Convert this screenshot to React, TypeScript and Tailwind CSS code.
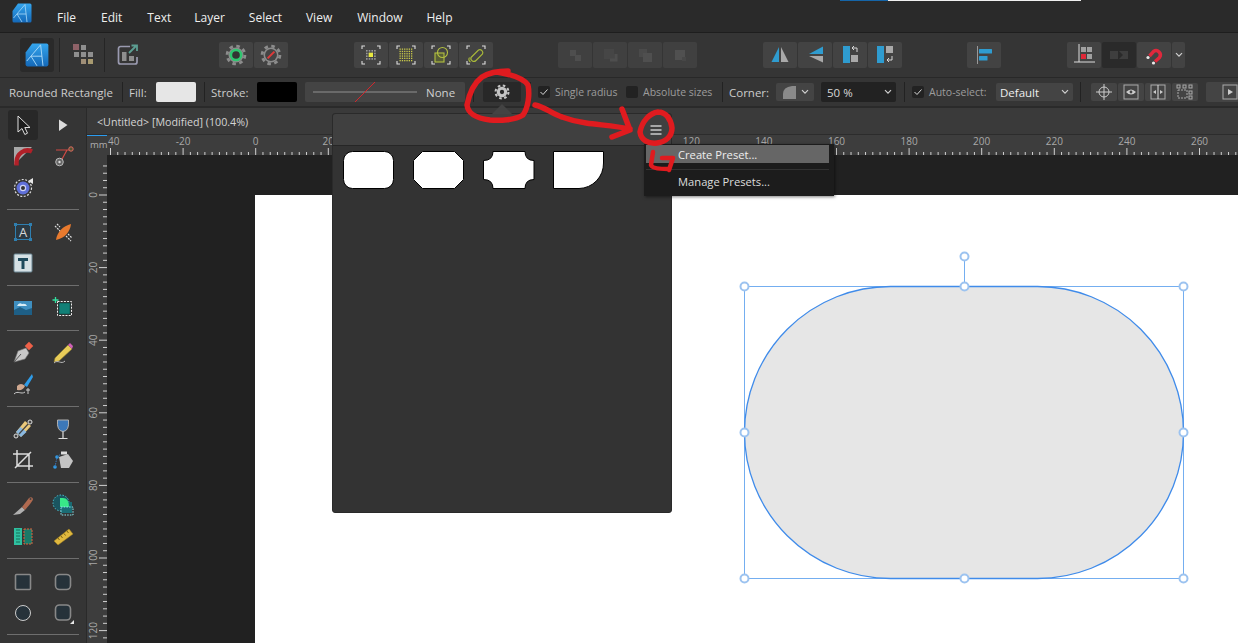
import React from "react";

const I = ({ children, w = 24, h = 24 }: { children: React.ReactNode; w?: number; h?: number }) => (
  <svg width={w} height={h} viewBox={`0 0 ${w} ${h}`} className="block shrink-0">{children}</svg>
);

const Logo = ({ s, id }: { s: number; id: string }) => (
  <svg width={s} height={s} viewBox="0 0 20 20" className="block shrink-0">
    <defs>
      <linearGradient id={id} x1="0" y1="0" x2="0" y2="1">
        <stop offset="0" stopColor="#35a6ee" />
        <stop offset="1" stopColor="#1468b8" />
      </linearGradient>
    </defs>
    <path d="M6 .5H18a1.5 1.5 0 0 1 1.5 1.5V18a1.5 1.5 0 0 1-1.5 1.5H2A1.5 1.5 0 0 1 .5 18V8Z" fill={`url(#${id})`} />
    <path d="M1.5 15 13 1.5M13 1.5 15 19M5 11H14.2M5 11 10 19" stroke="#a8d8f8" strokeWidth=".8" fill="none" />
  </svg>
);

const Gear = ({ size = 26, color = "#8c8c8c", inner = 7.2, sw = 3.4, children }: { size?: number; color?: string; inner?: number; sw?: number; children?: React.ReactNode }) => (
  <svg width={size} height={size} viewBox="0 0 26 26" className="block shrink-0">
    <circle cx="13" cy="13" r="10.5" fill="none" stroke={color} strokeWidth="3.4" strokeDasharray="4.2 4.05" />
    <circle cx="13" cy="13" r={inner} fill="none" stroke={color} strokeWidth={sw} />
    {children}
  </svg>
);

const dots = (x0: number, y0: number, n: number, step: number, color: string, size = 1.6) => {
  const r: React.ReactNode[] = [];
  for (let a = 0; a < n; a++)
    for (let b = 0; b < n; b++)
      r.push(<rect key={`${a}-${b}`} x={x0 + a * step} y={y0 + b * step} width={size} height={size} fill={color} />);
  return r;
};

const Corners = () => (
  <path d="M3 6V3H6M18 3H21V6M21 18V21H18M6 21H3V18" stroke="#ddd" strokeWidth="1.1" fill="none" />
);

const TB = ({ children, off }: { children?: React.ReactNode; off?: boolean }) => (
  <div className={`w-[34px] h-[26px] rounded-[2px] flex items-center justify-center ${off ? "bg-[#404040]" : "bg-[#434343]"}`}>{children}</div>
);

const CB = ({ children }: { children?: React.ReactNode }) => (
  <div className="w-[26px] h-[18px] bg-[#444444] rounded-[2px] flex items-center justify-center">{children}</div>
);

const Sep = ({ ml }: { ml: string }) => <div className={`w-px h-[20px] bg-[#222222] ${ml}`} />;

const Check = ({ on }: { on?: boolean }) => (
  <div className="w-[12px] h-[12px] bg-[#222222] rounded-[2px] flex items-center justify-center shrink-0">
    {on && (
      <svg width="10" height="10" viewBox="0 0 10 10">
        <path d="M1.5 5 4 7.5 8.5 2.5" stroke="#d8d8d8" strokeWidth="1" fill="none" />
      </svg>
    )}
  </div>
);

const Chev = ({ c = "#d0d0d0" }: { c?: string }) => (
  <svg width="8" height="6" viewBox="0 0 8 6" className="block">
    <path d="M1 1.2 4 4.2 7 1.2" stroke={c} strokeWidth="1.2" fill="none" />
  </svg>
);

const ToolSep = ({ cls }: { cls: string }) => <div className={`ml-[7px] w-[72px] h-px bg-[#6e6e6e] ${cls}`} />;

const ToolRow = ({ a, b, cls = "h-[31px]", sel }: { a?: React.ReactNode; b?: React.ReactNode; cls?: string; sel?: boolean }) => (
  <div className={`flex ${cls}`}>
    <div className="w-[46px] flex items-center justify-center">
      <div className={`w-[30px] h-[30px] rounded-[3px] flex items-center justify-center ${sel ? "bg-[#282828]" : ""}`}>{a}</div>
    </div>
    <div className="w-[34px] flex items-center justify-center">{b}</div>
  </div>
);

const ROOT = 255.7;
const PX = 72.6 / 20;

const HRuler = () => {
  const t: React.ReactNode[] = [];
  for (let v = -40; v <= 270; v += 2) {
    const x = ROOT + v * PX;
    const major = v % 20 === 0;
    t.push(<line key={v} x1={x} x2={x} y1={major ? 148 : 152} y2={155} stroke="#d0d0d0" strokeWidth="1" />);
    if (major)
      t.push(
        <text key={`t${v}`} x={v === -40 ? 108 : x} y={145} textAnchor={v === -40 ? "start" : "middle"} fontSize="10" fill="#a8a8a8">
          {v === -40 ? 40 : v}
        </text>
      );
  }
  return (
    <svg width="1131" height="20" viewBox="107 135 1131 20" className="block">
      {t}
    </svg>
  );
};

const VRuler = () => {
  const t: React.ReactNode[] = [];
  for (let v = -8; v <= 124; v += 2) {
    const y = 195 + v * PX;
    const major = v % 20 === 0;
    t.push(<line key={v} x1={major ? 99 : 103} x2={107} y1={y} y2={y} stroke="#d0d0d0" strokeWidth="1" />);
    if (major)
      t.push(
        <text key={`t${v}`} x={0} y={0} textAnchor="middle" fontSize="10" fill="#a8a8a8" transform={`translate(97 ${y}) rotate(-90)`}>
          {v}
        </text>
      );
  }
  return (
    <svg width="20" height="488" viewBox="87 155 20 488" className="block">
      {t}
    </svg>
  );
};

const H = ({ x, y }: { x: number; y: number }) => (
  <circle cx={x} cy={y} r="4" fill="#ffffff" stroke="#9cc3f0" strokeWidth="2" />
);

const PS = "fill-white stroke-black";

export default function App() {
  return (
    <div
      className="relative w-[1238px] h-[643px] overflow-hidden flex flex-col bg-[#353535] text-[#cccccc] text-[11.5px]"
      style={{ fontFamily: '"Open Sans", "Noto Sans", sans-serif' }}
    >
      {/* Title / menu */}
      <div className="relative h-[33px] bg-[#2a2a2a] border-b border-[#1e1e1e] flex items-center shrink-0">
        <div className="ml-[12px] -mt-[7px]"><Logo s={20} id="lg1" /></div>
        <div className="flex text-[12px] text-[#eeeeee] mt-[3px]">
          <span className="ml-[25px]">File</span>
          <span className="ml-[25px]">Edit</span>
          <span className="ml-[25px]">Text</span>
          <span className="ml-[23px]">Layer</span>
          <span className="ml-[24px]">Select</span>
          <span className="ml-[24px]">View</span>
          <span className="ml-[25px]">Window</span>
          <span className="ml-[24px]">Help</span>
        </div>
        <div className="absolute top-0 left-[840px] w-[48px] h-px bg-[#1565a8]" />
        <div className="absolute top-0 left-[888px] w-[193px] h-px bg-[#f0f0f0]" />
      </div>

      {/* Main toolbar */}
      <div className="h-[45px] bg-[#353535] border-b border-[#282828] flex items-center pl-[20px] shrink-0">
        <div className="w-[34px] h-[34px] bg-[#2a2a2a] rounded-[3px] flex items-center justify-center"><Logo s={24} id="lg2" /></div>
        <div className="w-px h-[34px] bg-[#252525] ml-[5px]" />
        <div className="ml-[12px]">
          <I w={22} h={22}>
            <rect x="1" y="0" width="6" height="6" fill="#8f6268" />
            <rect x="9" y="1" width="5" height="5" fill="#8f8f8f" />
            <rect x="2" y="8" width="5" height="5" fill="#8f8f8f" />
            <rect x="9" y="8" width="5" height="5" fill="#8f8f8f" />
            <rect x="16" y="8" width="5" height="5" fill="#8f8f8f" />
            <rect x="9" y="15" width="5" height="5" fill="#a08f78" />
            <rect x="16" y="15" width="5" height="5" fill="#a89a70" />
          </I>
        </div>
        <div className="w-px h-[34px] bg-[#252525] ml-[10px]" />
        <div className="ml-[12px]">
          <I w={22} h={22}>
            <path d="M13 2.5H3.5a2 2 0 0 0-2 2V18a2 2 0 0 0 2 2H18a2 2 0 0 0 2-2V13" stroke="#9a9ab0" strokeWidth="1.7" fill="none" />
            <rect x="5" y="8" width="4.5" height="9" fill="#8e8e8e" />
            <rect x="12" y="12" width="5" height="5" fill="#8e8e8e" />
            <path d="M12 9 19 2M14.5 1.5H20V7" stroke="#5c9e92" strokeWidth="1.8" fill="none" />
          </I>
        </div>
        <div className="flex gap-px ml-[80px]">
          <TB>
            <Gear size={22}>
              <circle cx="13" cy="13" r="6" fill="#333" stroke="#2fc56f" strokeWidth="3" />
            </Gear>
          </TB>
          <TB>
            <Gear size={22}>
              <circle cx="13" cy="13" r="7" fill="#444" />
              <path d="M9 17 17 9" stroke="#e03a3a" strokeWidth="2.4" />
            </Gear>
          </TB>
        </div>
        <div className="flex gap-px ml-[66px]">
          <TB>
            <I>
              <Corners />
              <g>{dots(7, 7, 4, 2.7, "#9a9a9a")}</g>
              <rect x="9.7" y="9.7" width="4.3" height="4.3" fill="#e8e840" />
            </I>
          </TB>
          <TB>
            <I>
              <Corners />
              <g>{dots(5.5, 5.5, 6, 2.3, "#c9c94a", 1.3)}</g>
            </I>
          </TB>
          <TB>
            <I>
              <Corners />
              <rect x="6" y="10" width="9" height="9" fill="#6d7a2a" fillOpacity=".5" stroke="#b3c040" strokeWidth="1.1" />
              <circle cx="13.5" cy="9.5" r="5" fill="none" stroke="#b3c040" strokeWidth="1.1" />
            </I>
          </TB>
          <TB>
            <I>
              <Corners />
              <path d="M7 14.5 14.5 7a3 3 0 0 1 4 4L12 17.5a3 3 0 0 1-5-3ZM6.5 19a3 3 0 0 1-1-4.5" fill="none" stroke="#a8b83a" strokeWidth="1.2" />
            </I>
          </TB>
        </div>
        <div className="flex gap-px ml-[65px]">
          <TB off>
            <I><rect x="7" y="7" width="6" height="6" fill="#4e4e4e" /><rect x="12" y="12" width="6" height="6" fill="#4e4e4e" /></I>
          </TB>
          <TB off>
            <I><rect x="6" y="6" width="10" height="10" fill="#464646" /><path d="M12 17h6v-6" stroke="#4e4e4e" strokeWidth="3" fill="none" /></I>
          </TB>
          <TB off>
            <I><rect x="6" y="6" width="8" height="8" fill="#4a4a4a" /><rect x="10" y="10" width="9" height="9" fill="#4f4f4f" /></I>
          </TB>
          <TB off>
            <I><rect x="7" y="7" width="10" height="10" fill="#505050" /><rect x="14" y="14" width="4" height="4" fill="#474747" /></I>
          </TB>
        </div>
        <div className="flex gap-px ml-[66px]">
          <TB>
            <I>
              <path d="M11 4V19H3.5Z" fill="#2f9cd0" />
              <path d="M13 4V19H20.5Z" fill="#a9a9a9" />
            </I>
          </TB>
          <TB>
            <I>
              <path d="M20 3.5V11H6Z" fill="#2f9cd0" />
              <path d="M20 13V19.5L6 13Z" fill="#a9a9a9" />
            </I>
          </TB>
          <TB>
            <I>
              <rect x="5" y="3" width="7" height="17" fill="#2f9cd0" />
              <rect x="13" y="12" width="7" height="7" fill="#a9a9a9" />
              <path d="M19 9V5H14M16 3 14 5l2 2" stroke="#d8d8d8" strokeWidth="1" fill="none" />
            </I>
          </TB>
          <TB>
            <I>
              <rect x="4" y="3" width="7" height="17" fill="#2f9cd0" />
              <rect x="13" y="3" width="7" height="7" fill="#a9a9a9" />
              <path d="M19 13V17H14M16 15l-2 2 2 2" stroke="#d8d8d8" strokeWidth="1" fill="none" />
            </I>
          </TB>
        </div>
        <div className="ml-[65px]">
          <TB>
            <I>
              <path d="M5.5 3V21" stroke="#999" strokeWidth="1" />
              <rect x="7" y="6" width="13" height="4.5" rx=".5" fill="#2f9cd0" />
              <rect x="7" y="13" width="8.5" height="4.5" rx=".5" fill="#2f9cd0" />
            </I>
          </TB>
        </div>
        <div className="flex gap-px ml-[66px]">
          <TB>
            <I>
              <path d="M7 1V19M2 19H23" stroke="#ddd" strokeWidth="1" />
              <rect x="9" y="4" width="5" height="5" fill="#a0a0a0" />
              <rect x="15" y="4" width="5" height="5" fill="#a0a0a0" />
              <rect x="9" y="11" width="5" height="5" fill="#e02838" />
              <rect x="15" y="11" width="5" height="5" fill="#a0a0a0" />
            </I>
          </TB>
          <div className="w-[34px] h-[26px] rounded-[2px] bg-[#2a2a2a] flex items-center justify-center">
            <I>
              <rect x="3" y="8" width="8" height="8" fill="#3e3e3e" />
              <path d="M12 8H21V16H12L16 12Z" fill="#3e3e3e" />
            </I>
          </div>
          <TB>
            <I>
              <path d="M7.5 13 11.5 8.5A4.3 4.3 0 0 1 17.5 14.5L13 18.5" fill="none" stroke="#e0283c" strokeWidth="3.4" />
              <circle cx="6" cy="14.5" r="1.6" fill="#e8e8e8" />
              <circle cx="11.5" cy="20" r="1.6" fill="#e8e8e8" />
            </I>
          </TB>
          <div className="w-[13px] h-[26px] rounded-[2px] bg-[#434343] flex items-center justify-center"><Chev /></div>
        </div>
      </div>

      {/* Context bar */}
      <div className="h-[30px] bg-[#353535] border-b-2 border-[#2a2a2a] flex items-center pl-[9px] shrink-0 whitespace-nowrap [&>*]:shrink-0 [&>span]:mt-[2px]">
        <span className="w-[104px]">Rounded Rectangle</span>
        <Sep ml="ml-[9px]" />
        <span className="ml-[6px] w-[27px]">Fill:</span>
        <div className="w-[40px] h-[20px] rounded-[2px] bg-[#e6e6e6]" />
        <Sep ml="ml-[8px]" />
        <span className="ml-[6px] w-[46px]">Stroke:</span>
        <div className="w-[40px] h-[20px] rounded-[2px] bg-black" />
        <div className="relative ml-[8px] w-[160px] h-[20px] rounded-[2px] bg-[#444444] flex items-center">
          <svg width="112" height="20" viewBox="0 0 112 20" className="block">
            <path d="M8 10H112" stroke="#909090" strokeWidth="1" />
            <path d="M50 20 70 0" stroke="#d4262c" strokeWidth="1" />
          </svg>
          <span className="ml-[9px] mt-[2px] text-[#d0d0d0]">None</span>
        </div>
        <Sep ml="ml-[8px]" />
        <div className="ml-[9px] w-[38px] h-[20px] rounded-[2px] bg-[#282828] flex items-center justify-center">
          <Gear size={16} color="#c4c4c4" inner={6} sw={5} />
        </div>
        <Sep ml="ml-[9px]" />
        <div className="ml-[7px]"><Check on /></div>
        <span className="ml-[5px] w-[66px] text-[10.5px] text-[#9c9c9c]">Single radius</span>
        <div className="ml-[5px]"><Check /></div>
        <span className="ml-[5px] w-[74px] text-[10.5px] text-[#9c9c9c]">Absolute sizes</span>
        <Sep ml="ml-[5px]" />
        <span className="ml-[6px] w-[47px]">Corner:</span>
        <div className="w-[38px] h-[18px] bg-[#444444] rounded-[2px] flex items-center justify-between pl-[6px] pr-[5px]">
          <svg width="14" height="14" viewBox="0 0 14 14" className="block">
            <path d="M1 14V9Q1 2 10 1H14V14Z" fill="#8a8a8a" />
          </svg>
          <Chev />
        </div>
        <div className="ml-[7px] w-[75px] h-[20px] bg-[#222222] rounded-[2px] flex items-center justify-between pl-[6px] pr-[4px] text-[#d8d8d8]">
          <span className="mt-[2px]">50 %</span>
          <Chev />
        </div>
        <Sep ml="ml-[8px]" />
        <div className="ml-[7px]"><Check on /></div>
        <span className="ml-[5px] w-[67px] text-[10.5px] text-[#9c9c9c]">Auto-select:</span>
        <div className="w-[77px] h-[18px] bg-[#444444] rounded-[2px] flex items-center justify-between pl-[4px] pr-[4px] text-[#eeeeee]">
          <span className="mt-[2px]">Default</span>
          <Chev />
        </div>
        <Sep ml="ml-[7px]" />
        <div className="flex gap-px ml-[10px]">
          <CB>
            <svg width="16" height="16" viewBox="0 0 16 16"><circle cx="8" cy="8" r="5" fill="none" stroke="#ccc" /><path d="M8 0V16M0 8H16" stroke="#ccc" /></svg>
          </CB>
          <CB>
            <svg width="16" height="16" viewBox="0 0 16 16"><rect x="1" y="1" width="14" height="14" fill="none" stroke="#aaa" /><path d="M3 8Q8 3 13 8Q8 13 3 8Z" fill="#ccc" /><circle cx="8" cy="8" r="1.4" fill="#444" /></svg>
          </CB>
          <CB>
            <svg width="16" height="16" viewBox="0 0 16 16"><rect x="1" y="1" width="14" height="14" fill="none" stroke="#aaa" /><path d="M8 1V15" stroke="#ddd" /><path d="M3 8 6 6V10ZM13 8 10 6V10Z" fill="#ccc" /></svg>
          </CB>
          <CB>
            <svg width="18" height="16" viewBox="0 0 18 16"><g fill="none" stroke="#aaa"><rect x="1" y="1" width="3" height="3" /><rect x="7" y="1" width="3" height="3" /><rect x="13" y="1" width="3" height="3" /><rect x="13" y="7" width="3" height="3" /><rect x="13" y="12" width="3" height="3" /><rect x="2" y="6" width="9" height="8" strokeDasharray="2 1" /></g></svg>
          </CB>
        </div>
        <div className="ml-[8px] w-[40px] h-[20px] bg-[#444444] rounded-[2px] flex items-center pl-[16px]">
          <svg width="16" height="16" viewBox="0 0 16 16" className="block shrink-0"><rect x="1" y="1" width="14" height="14" fill="none" stroke="#aaa" /><path d="M6 5 11 8 6 11Z" fill="#ccc" /></svg>
        </div>
      </div>

      {/* Body */}
      <div className="flex flex-1 min-h-0">
        {/* Tools */}
        <div className="w-[87px] shrink-0 bg-[#353535] border-r border-[#2a2a2a] pt-[2px]">
          <ToolRow
            cls="h-[30px]"
            sel
            a={<I><path d="M7 3V19L11 15.5 13.8 21.5 16.5 20.2 13.8 14.5H19Z" fill="#1c1c1c" stroke="#e0e0e0" strokeWidth="1" /></I>}
            b={<I><path d="M8 6.5V18L16.5 12Z" fill="#dcdcdc" /></I>}
          />
          <ToolRow
            a={<I><path d="M3 3H21L3 21Z" fill="#a8a8a8" /><path d="M5.5 21.5V18A11 12 0 0 1 21 7.5" fill="none" stroke="#b02028" strokeWidth="4.5" /></I>}
            b={<I><path d="M5 6H20M16 6 10 17" stroke="#d24a44" strokeWidth="1.2" fill="none" /><circle cx="20" cy="5" r="2.2" fill="#553" stroke="#e06a60" /><circle cx="8.5" cy="18" r="3.8" fill="#666" stroke="#bbb" /><circle cx="8.5" cy="18" r="1.2" fill="#ddd" /></I>}
          />
          <ToolRow
            a={<I><circle cx="12" cy="13" r="8.5" fill="none" stroke="#ddd" strokeWidth="1.2" strokeDasharray="2 1.5" /><circle cx="12" cy="13" r="6.5" fill="#5f6fd8" /><circle cx="12" cy="13" r="2.6" fill="#333" stroke="#cfd4f5" strokeWidth="1.2" /><path d="M17 6 22 3V9Z" fill="#e8e8e8" /></I>}
          />
          <ToolSep cls="mt-[7px] mb-[6px]" />
          <ToolRow
            a={<I><rect x="4.5" y="4.5" width="15" height="15" fill="#2b3a44" stroke="#2f7fb0" strokeWidth="1" /><rect x="3" y="3" width="3" height="3" fill="#2f7fb0" /><rect x="18" y="3" width="3" height="3" fill="#2f7fb0" /><rect x="3" y="18" width="3" height="3" fill="#2f7fb0" /><rect x="18" y="18" width="3" height="3" fill="#2f7fb0" /><text x="12" y="17" textAnchor="middle" fontSize="13" fill="#d8d8d8">A</text></I>}
            b={<I><path d="M5 20C6 12 12 6 20 4 19 12 14 18 5 20Z" fill="#e87a2e" /><path d="M4 6 9 11M15 16 20 21M6 4l3 3M17 14l4 4" stroke="#ddd" strokeWidth="1.2" strokeDasharray="2 1" /></I>}
          />
          <ToolRow
            a={<I><rect x="3" y="3" width="18" height="18" rx="1" fill="#d5e0e4" stroke="#6b8794" strokeWidth="1" /><path d="M7 7H17V10H13.5V18H10.5V10H7Z" fill="#1e4a5c" /></I>}
          />
          <ToolSep cls="mt-[7px] mb-[6px]" />
          <ToolRow
            a={<I><rect x="3" y="5" width="18" height="14" fill="#3f8fc0" /><path d="M3 19V14L9 11 15 14 21 12V19Z" fill="#1e5f86" /><path d="M6 10Q8 6 11 8 15 7 16 10Z" fill="#d8ecf5" /></I>}
            b={<I><rect x="8" y="7" width="11" height="11" fill="#127f76" stroke="#0d3d3a" strokeWidth=".5" /><rect x="6.5" y="5.5" width="14" height="14" fill="none" stroke="#eee" strokeWidth="1" strokeDasharray="2 1.2" /><path d="M4.5 1V7M1.5 4H7.5" stroke="#33e0a0" strokeWidth="1.3" /></I>}
          />
          <ToolSep cls="mt-[7px] mb-[6px]" />
          <ToolRow
            a={<I><path d="M3 21 7 10 15 7 18 12 14 18Z" fill="#c8c8c8" stroke="#777" strokeWidth=".6" /><path d="M3 21 10 13" stroke="#555" strokeWidth="1" /><rect x="15" y="2" width="6" height="6" transform="rotate(45 18 5)" fill="#ee6048" /></I>}
            b={<I><path d="M4 17 17 4 21 8 8 20 3 21Z" fill="#e8cc58" stroke="#8a7a30" strokeWidth=".6" /><path d="M17 4 19 2 22 5 21 8Z" fill="#d060b8" /><path d="M3 22C7 18 10 24 14 20" stroke="#bbb" strokeWidth="1" fill="none" /></I>}
          />
          <ToolRow
            a={<I><path d="M13 13 21 2 22 5 16 15Z" fill="#2f9ce8" /><path d="M6 14Q10 10 14 14 12 19 6 18Z" fill="#cfa890" /><path d="M3 22C7 18 10 23 14 20M17 16V22M15 18H19" stroke="#ccc" strokeWidth="1" fill="none" /></I>}
          />
          <ToolSep cls="mt-[7px] mb-[6px]" />
          <ToolRow
            a={<I><path d="M5 15 14 4 20 9 10 20Z" fill="#e9c77a" /><path d="M9.5 10 15.5 15 10 20 5 15Z" fill="#8ab8e0" /><path d="M8 17 18 6" stroke="#444" strokeWidth="1.2" /><circle cx="19" cy="5" r="2" fill="#444" stroke="#ddd" /><circle cx="5" cy="19" r="2" fill="#444" stroke="#ddd" /></I>}
            b={<I><path d="M6.5 3H17.5Q18.5 14 12 14.5 5.5 14 6.5 3Z" fill="#3d78b8" stroke="#b0b0b0" /><path d="M12 14.5V21M7.5 21.5H16.5" stroke="#ddd" strokeWidth="1.2" /></I>}
          />
          <ToolRow
            a={<I><path d="M6 2V18H22M2 6H18V22M4 20 20 4" stroke="#dcdcdc" strokeWidth="1.5" fill="none" /></I>}
            b={<I><path d="M8 9 17 6 22 13 18 20H10Z" fill="#c4c4c4" /><path d="M10 5 16 5" stroke="#ddd" strokeWidth="3" /><circle cx="4" cy="19" r="1.8" fill="#2f9ce8" /><circle cx="6" cy="9" r="1.8" fill="#2f9ce8" /><path d="M4 19 6 9 10 6" stroke="#3d78b8" fill="none" strokeDasharray="1.5 1" /></I>}
          />
          <ToolSep cls="mt-[7px] mb-[6px]" />
          <ToolRow
            a={<I><path d="M2 22 11 14 14 17 9 21Z" fill="#b0b0b0" /><path d="M11 14 18 5Q21 3 22 6 22 8 14 17Z" fill="#b06a50" /><circle cx="19.5" cy="6" r="1" fill="#444" /></I>}
            b={<I><circle cx="10" cy="10" r="8" fill="#1a5560" stroke="#4fc0d0" strokeDasharray="1.5 1.5" /><rect x="10" y="9" width="11" height="11" fill="#1a6c74" /><path d="M9 5H12Q18 5 18 14H9Z" fill="#38e888" /><rect x="10" y="14" width="12" height="8" fill="none" stroke="#8fe8f0" strokeDasharray="1.5 1.2" /></I>}
          />
          <ToolRow
            cls="h-[32px]"
            a={<I><rect x="3" y="4" width="8" height="17" fill="#2fc0a0" /><path d="M5 6H9M5 9H9M5 12H9M5 15H9M5 18H9" stroke="#0e5a48" strokeWidth=".8" /><rect x="13" y="5" width="8" height="15" fill="#1a7a68" stroke="#e0603a" strokeDasharray="2 1" /></I>}
            b={<I><path d="M3 17 18 5 22 10 7 21Z" fill="#e0b83e" stroke="#a08020" strokeWidth=".5" /><path d="M7 14l1.5 2M10 12l1.5 2M13 9.5l1.5 2M16 7l1.5 2" stroke="#705a10" strokeWidth=".9" /></I>}
          />
          <ToolSep cls="mt-[6px] mb-[7px]" />
          <ToolRow
            a={<I><rect x="4.5" y="4.5" width="15" height="15" rx="1" fill="#26323a" stroke="#888" strokeWidth="1.6" /></I>}
            b={<I><rect x="4.5" y="4.5" width="15" height="15" rx="4" fill="#26323a" stroke="#888" strokeWidth="1.6" /></I>}
          />
          <ToolRow
            a={<I><circle cx="12" cy="12" r="7.5" fill="#26323a" stroke="#ccc" strokeWidth="1" /></I>}
            b={<I><rect x="4.5" y="4" width="15" height="15" rx="4" fill="#26323a" stroke="#888" strokeWidth="1.6" /><path d="M23 19V23H19Z" fill="#e8e8e8" /></I>}
          />
          <ToolSep cls="mt-[6px]" />
        </div>

        {/* Document */}
        <div className="flex-1 min-w-0 flex flex-col">
          <div className="h-[27px] bg-[#3a3a3a] border-b border-[#2c2c2c] flex items-center pl-[10px] pt-[2px] text-[10.7px] text-[#d4d4d4] shrink-0">
            &lt;Untitled&gt; [Modified] (100.4%)
          </div>
          <div className="flex h-[20px] bg-[#3d3d3d] shrink-0">
            <div className="w-[20px] text-[9.5px] leading-[12px] text-[#b0b0b0] pl-[3px] pt-[3px] border-t border-[#2b9cf0]">mm</div>
            <HRuler />
          </div>
          <div className="flex flex-1 min-h-0">
            <div className="w-[20px] bg-[#3d3d3d] shrink-0"><VRuler /></div>
            <div className="relative flex-1 bg-[#212121] pl-[148px] pt-[40px]">
              <div className="h-full bg-white" />
            </div>
          </div>
        </div>
      </div>

      {/* Selected shape on the page */}
      <svg className="absolute left-[730px] top-[245px]" width="470" height="345" viewBox="730 245 470 345">
        <rect x="744.5" y="286.5" width="439" height="292" fill="none" stroke="#74aef0" strokeWidth="1" />
        <rect x="744.5" y="286.5" width="439" height="292" rx="146" ry="146" fill="#e6e6e6" stroke="#3f8bea" strokeWidth="1.3" />
        <path d="M964.5 256V286" stroke="#74aef0" />
        <H x={964.5} y={256.5} />
        <H x={744.5} y={286.5} />
        <H x={964.5} y={286.5} />
        <H x={1183.5} y={286.5} />
        <H x={744.5} y={432.5} />
        <H x={1183.5} y={432.5} />
        <H x={744.5} y={578.5} />
        <H x={964.5} y={578.5} />
        <H x={1183.5} y={578.5} />
      </svg>

      {/* Presets popover */}
      <div className="absolute left-[332px] top-[113px] w-[340px] h-[400px] bg-[#333333] border border-[#2a2a2a] rounded-[3px] flex flex-col">
        <div className="h-[32px] bg-[#404040] border-b border-[#262626] flex items-center justify-end pr-[6px] rounded-t-[3px]">
          <svg width="14" height="14" viewBox="0 0 14 14" className="mr-[2px]">
            <path d="M1.5 3H12.5M1.5 7H12.5M1.5 11H12.5" stroke="#a8a8a8" strokeWidth="1.8" />
          </svg>
        </div>
        <svg width="280" height="50" viewBox="0 0 280 50" className="ml-[8px] mt-[4px] block">
          <rect className={PS} x="2.5" y="1.5" width="50" height="37" rx="9" />
          <path className={PS} d="M81.5 1.5H113.5L122.5 10.5V29.5L113.5 38.5H81.5L72.5 29.5V10.5Z" />
          <path className={PS} d="M152 1.5H184Q184 10.5 193 10.5V29.5Q184 29.5 184 38.5H152Q152 29.5 142.5 29.5V10.5Q152 10.5 152 1.5Z" />
          <path className={PS} d="M212.5 1.5H262.5V13A25 25 0 0 1 238 38.5H212.5Z" />
        </svg>
      </div>
      <svg className="absolute left-[492px] top-[103px]" width="20" height="11" viewBox="0 0 20 11">
        <path d="M0 11 10 1 20 11Z" fill="#434343" />
      </svg>

      {/* Menu */}
      <div className="absolute left-[644px] top-[144px] w-[190px] h-[52px] bg-[#1c1c1c] shadow-[1px_1px_3px_rgba(0,0,0,0.5)] text-[#dcdcdc] text-[11.2px] pt-px">
        <div className="ml-[2px] mr-[5px] h-[18px] bg-[#666666] flex items-center pl-[32px] pt-[2px] text-[#eeeeee]">Create Preset...</div>
        <div className="mx-[2px] mr-[5px] mt-[6px] h-px bg-[#333333]" />
        <div className="mt-[3px] h-[18px] flex items-center pl-[34px]">Manage Presets...</div>
      </div>

      {/* Red annotations */}
      <svg className="absolute inset-0 pointer-events-none" width="1238" height="643" viewBox="0 0 1238 643" fill="none" stroke="#e01b1f" strokeLinecap="round" strokeLinejoin="round">
        <path strokeWidth="5.5" d="M508 71C500 71 490 72 482 77 474 83 469 95 467 105 468 113 474 118 490 120 500 121 515 120 523 115 528 108 530 95 528 85 524 79 515 75 497 72" />
        <path strokeWidth="5.5" d="M535 105C545 107 552 114 562 117 570 120 578 122 586 123 600 125 616 126 630 129M622 109 630 130 612 137" />
        <path strokeWidth="5.5" d="M658 112C650 113 642 121 640 132 641 140 648 144 657 143 666 142 672 136 672 128 671 119 666 112 658 112" />
        <path strokeWidth="4.5" d="M653 152 651 165Q652 169 668 169M662 158H673L669 170" />
      </svg>
    </div>
  );
}
